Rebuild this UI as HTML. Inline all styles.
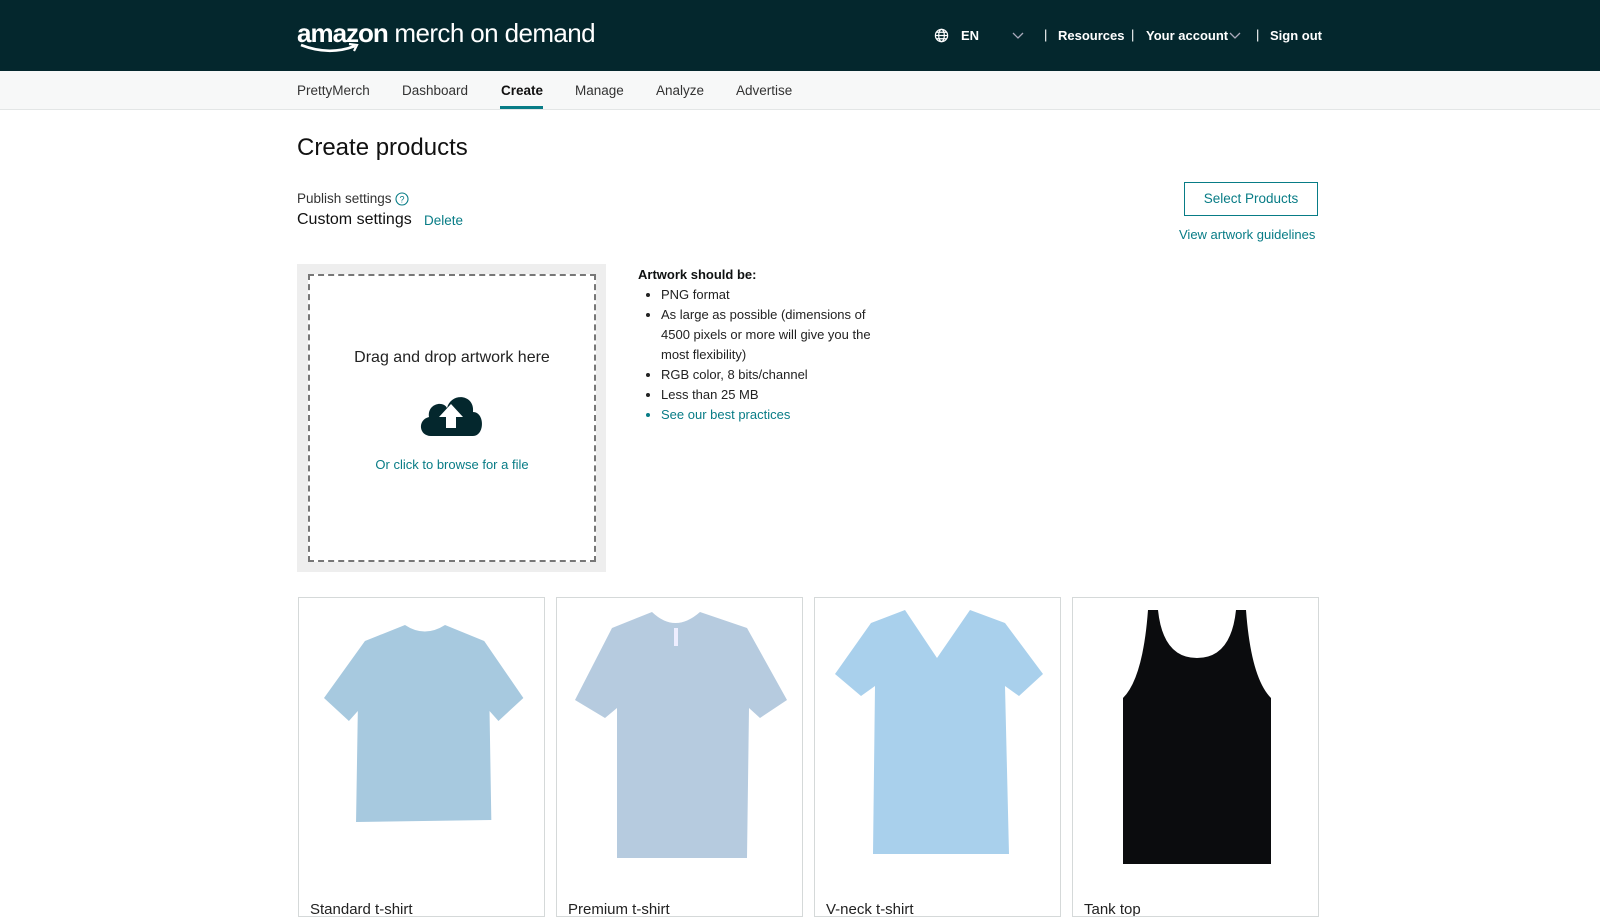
<!DOCTYPE html>
<html><head><meta charset="utf-8"><style>
*{margin:0;padding:0;box-sizing:border-box}
body{width:1600px;height:900px;overflow:hidden;background:#fff;font-family:"Liberation Sans",Arial,sans-serif;color:#0f1111;position:relative}
.a{position:absolute;white-space:nowrap}
.hdr{position:absolute;left:0;top:0;width:1600px;height:71px;background:#04272d}
.nav{position:absolute;left:0;top:71px;width:1600px;height:39px;background:#f7f8f8;border-bottom:1px solid #e3e6e6}
.nav span{position:absolute;top:12px;font-size:13.5px;color:#333}
.w{color:#fff;font-size:13px;font-weight:bold}
.link{color:#087c86}
ul{list-style:disc}
.card{position:absolute;top:597px;width:247px;height:320px;border:1px solid #d5d9d9;background:#fff;overflow:hidden}
.card .l{position:absolute;left:11px;top:293px;font-size:15px;color:#222}
</style></head><body>
<div class="hdr"></div>
<div class="a" style="left:297px;top:18px;color:#fff;font-size:26px;letter-spacing:-0.6px"><b style="letter-spacing:-1px">amazon</b> merch on demand</div>
<svg class="a" style="left:299px;top:42px" width="62" height="12" viewBox="0 0 62 12"><path d="M2 3 Q30 14 56 4" stroke="#fff" stroke-width="2.6" fill="none"/><path d="M50 2 L58 3 L55 9" stroke="#fff" stroke-width="2.2" fill="none"/></svg>
<svg class="a" style="left:934px;top:28px" width="15" height="15" viewBox="0 0 16 16" fill="none" stroke="#fff" stroke-width="1.3"><circle cx="8" cy="8" r="6.5"/><ellipse cx="8" cy="8" rx="3" ry="6.5"/><path d="M1.5 8h13M2.5 4.5h11M2.5 11.5h11"/></svg>
<div class="a w" style="left:961px;top:28px">EN</div>
<svg class="a" style="left:1012px;top:32px" width="12" height="8"><path d="M1 1l5 5 5-5" stroke="#aab" fill="none" stroke-width="1.3"/></svg>
<div class="a w" style="left:1044px;top:27px;font-weight:normal">|</div>
<div class="a w" style="left:1058px;top:28px">Resources</div>
<div class="a w" style="left:1131px;top:27px;font-weight:normal">|</div>
<div class="a w" style="left:1146px;top:28px">Your account</div>
<svg class="a" style="left:1229px;top:32px" width="12" height="8"><path d="M1 1l5 5 5-5" stroke="#aab" fill="none" stroke-width="1.3"/></svg>
<div class="a w" style="left:1256px;top:27px;font-weight:normal">|</div>
<div class="a w" style="left:1270px;top:28px">Sign out</div>
<div class="nav"><span style="left:297px">PrettyMerch</span><span style="left:402px">Dashboard</span><span style="left:501px;font-weight:bold;color:#111">Create</span><span style="left:575px">Manage</span><span style="left:656px">Analyze</span><span style="left:736px">Advertise</span>
<div style="position:absolute;left:500px;top:35px;width:43px;height:3px;background:#087c86"></div></div>
<div class="a" style="left:297px;top:134px;font-size:24px;color:#111">Create products</div>
<div class="a" style="left:297px;top:191px;font-size:13.5px;color:#333">Publish settings</div>
<svg class="a" style="left:395px;top:192px" width="14" height="14" viewBox="0 0 14 14"><circle cx="7" cy="7" r="6" fill="none" stroke="#087c86" stroke-width="1.1"/><text x="7" y="10.5" font-size="9" text-anchor="middle" fill="#087c86" font-family="Liberation Sans">?</text></svg>
<div class="a" style="left:297px;top:211px;font-size:16px;color:#111">Custom settings</div>
<div class="a link" style="left:424px;top:213px;font-size:13.5px">Delete</div>
<div class="a" style="left:1184px;top:182px;width:134px;height:34px;border:1px solid #087c86;font-size:13.5px;color:#087c86;text-align:center;line-height:32px">Select Products</div>
<div class="a link" style="left:1179px;top:227px;font-size:13px">View artwork guidelines</div>
<div class="a" style="left:297px;top:264px;width:309px;height:308px;background:#eeeeee"></div>
<div class="a" style="left:308px;top:274px;width:288px;height:288px;background:#fff;border:2px dashed #777"></div>
<div class="a" style="left:308px;top:349px;width:288px;text-align:center;font-size:16px;color:#222">Drag and drop artwork here</div>
<svg class="a" style="left:417px;top:390px" width="68" height="48" viewBox="0 0 68 48"><path d="M14 46 C2 46 0 30 12 27 C10 14 26 10 30 18 C34 2 58 4 56 22 C68 22 68 46 56 46 Z" fill="#04272d"/><path d="M34 14 L46 27 H39 V38 H29 V27 H22 Z" fill="#fff"/></svg>
<div class="a link" style="left:308px;top:457px;width:288px;text-align:center;font-size:13px">Or click to browse for a file</div>
<div class="a" style="left:638px;top:267px;font-size:13px;font-weight:bold">Artwork should be:</div>
<ul class="a" style="left:661px;top:285px;font-size:13px;line-height:20px;color:#222;white-space:normal;width:225px">
<li>PNG format</li><li>As large as possible (dimensions of 4500 pixels or more will give you the most flexibility)</li><li>RGB color, 8 bits/channel</li><li>Less than 25 MB</li><li class="link">See our best practices</li></ul>
<div class="card" style="left:298px"><svg width="247" height="280" viewBox="0 0 247 280"><path d="M91 27 Q113 40 136 27 L180 43 L224 100 L196 123 L186 113 L188 222 L36 224 L38 113 L28 123 L0 100 L46 43 Z" transform="translate(25,0) scale(0.89,1)" fill="#a7c9df"/></svg><div class="l" style="top:303px">Standard t-shirt</div></div>
<div class="card" style="left:556px"><svg width="247" height="280" viewBox="0 0 247 280"><path d="M95 14 Q118 36 143 14 L190 30 L230 102 L203 120 L192 110 L190 260 L60 260 L60 110 L48 120 L18 102 L55 30 Z" fill="#b6cbdf"/><rect x="117" y="30" width="4" height="18" fill="#eef"/></svg><div class="l" style="top:303px">Premium t-shirt</div></div>
<div class="card" style="left:814px"><svg width="247" height="280" viewBox="0 0 247 280"><path d="M90 12 L122 60 L155 12 L190 25 L228 76 L204 98 L190 88 L194 256 L58 256 L60 88 L46 98 L20 76 L56 25 Z" fill="#a9d0ec"/></svg><div class="l" style="top:303px">V-neck t-shirt</div></div>
<div class="card" style="left:1072px"><svg width="247" height="280" viewBox="0 0 247 280"><path d="M75 12 L85 12 Q90 60 124 60 Q158 60 163 12 L173 12 Q178 80 198 100 L198 266 L50 266 L50 100 Q70 80 75 12 Z" fill="#0b0c0e"/></svg><div class="l" style="top:303px">Tank top</div></div>
</body></html>
